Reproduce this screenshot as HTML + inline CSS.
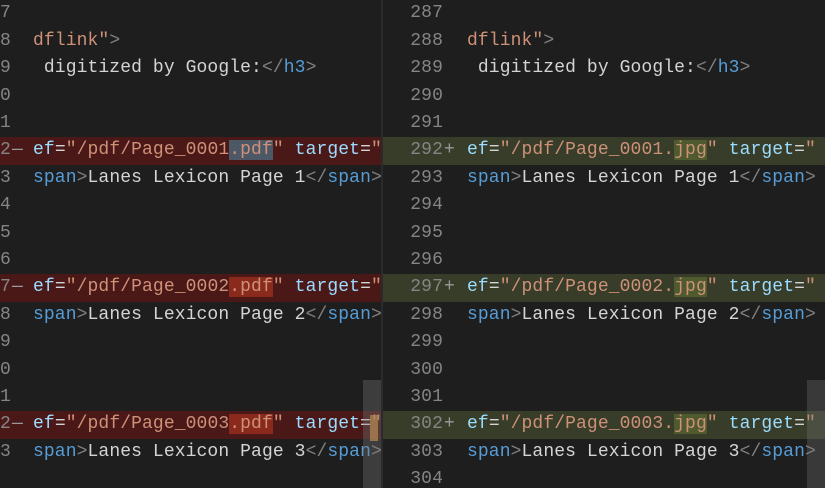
<!DOCTYPE html>
<html><head><meta charset="utf-8"><style>
body{margin:0;width:825px;height:488px;background:#1e1e1e;overflow:hidden;position:relative;font-family:"Liberation Mono",monospace;font-size:18px;letter-spacing:0.1px}
.pane{position:absolute;top:0;height:488px;overflow:hidden;background:#1e1e1e}
.l{position:absolute;left:0;right:0;height:27.4px;line-height:27.4px;white-space:pre;color:#d4d4d4}
.n{position:absolute;color:#858585;text-align:right}
.c{position:absolute}
.s{color:#ce9178}.a{color:#9cdcfe}.t{color:#569cd6}.g{color:#808080}
.del{background:#4b1818}.ins{background:#373d29}
.hd{background:#8a2a1c}.hd1{background:#4d5866}.hi{background:#4f5a2f}
.m{position:absolute;color:#9a9a9a}
</style></head><body>
<div class="pane" style="left:0;width:381px">
<div class="l" style="top:0.3px"><span class="n" style="left:0">7</span></div>
<div class="l" style="top:27.7px"><span class="n" style="left:0">8</span><span class="c" style="left:33px"><span class="s">dflink"</span><span class="g">&gt;</span></span></div>
<div class="l" style="top:55.1px"><span class="n" style="left:0">9</span><span class="c" style="left:33px"> digitized by Google:<span class="g">&lt;/</span><span class="t">h3</span><span class="g">&gt;</span></span></div>
<div class="l" style="top:82.5px"><span class="n" style="left:0">0</span></div>
<div class="l" style="top:109.9px"><span class="n" style="left:0">1</span></div>
<div class="l del" style="top:137.3px"><span class="n" style="left:0">2</span><span class="m" style="left:12px">—</span><span class="c" style="left:33px"><span class="a">ef</span>=<span class="s">"/pdf/Page_0001<span class="hd1">.pdf</span>"</span> <span class="a">target</span>=<span class="s">"</span></span></div>
<div class="l" style="top:164.7px"><span class="n" style="left:0">3</span><span class="c" style="left:33px"><span class="t">span</span><span class="g">&gt;</span>Lanes Lexicon Page 1<span class="g">&lt;/</span><span class="t">span</span><span class="g">&gt;</span></span></div>
<div class="l" style="top:192.1px"><span class="n" style="left:0">4</span></div>
<div class="l" style="top:219.5px"><span class="n" style="left:0">5</span></div>
<div class="l" style="top:246.9px"><span class="n" style="left:0">6</span></div>
<div class="l del" style="top:274.3px"><span class="n" style="left:0">7</span><span class="m" style="left:12px">—</span><span class="c" style="left:33px"><span class="a">ef</span>=<span class="s">"/pdf/Page_0002<span class="hd">.pdf</span>"</span> <span class="a">target</span>=<span class="s">"</span></span></div>
<div class="l" style="top:301.7px"><span class="n" style="left:0">8</span><span class="c" style="left:33px"><span class="t">span</span><span class="g">&gt;</span>Lanes Lexicon Page 2<span class="g">&lt;/</span><span class="t">span</span><span class="g">&gt;</span></span></div>
<div class="l" style="top:329.1px"><span class="n" style="left:0">9</span></div>
<div class="l" style="top:356.5px"><span class="n" style="left:0">0</span></div>
<div class="l" style="top:383.9px"><span class="n" style="left:0">1</span></div>
<div class="l del" style="top:411.3px"><span class="n" style="left:0">2</span><span class="m" style="left:12px">—</span><span class="c" style="left:33px"><span class="a">ef</span>=<span class="s">"/pdf/Page_0003<span class="hd">.pdf</span>"</span> <span class="a">target</span>=<span class="s">"</span></span></div>
<div class="l" style="top:438.7px"><span class="n" style="left:0">3</span><span class="c" style="left:33px"><span class="t">span</span><span class="g">&gt;</span>Lanes Lexicon Page 3<span class="g">&lt;/</span><span class="t">span</span><span class="g">&gt;</span></span></div>
<div style="position:absolute;left:363px;top:380px;width:18px;height:108px;background:rgba(121,121,121,0.35)"></div>
<div style="position:absolute;left:370px;top:415px;width:8px;height:26px;background:#b58a52;opacity:.7"></div>
</div>
<div style="position:absolute;left:381px;top:0;width:2px;height:488px;background:#2b2b2b"></div>
<div class="pane" style="left:383px;width:442px">
<div class="l" style="top:0.3px"><span class="n" style="right:382px">287</span></div>
<div class="l" style="top:27.7px"><span class="n" style="right:382px">288</span><span class="c" style="left:84px"><span class="s">dflink"</span><span class="g">&gt;</span></span></div>
<div class="l" style="top:55.1px"><span class="n" style="right:382px">289</span><span class="c" style="left:84px"> digitized by Google:<span class="g">&lt;/</span><span class="t">h3</span><span class="g">&gt;</span></span></div>
<div class="l" style="top:82.5px"><span class="n" style="right:382px">290</span></div>
<div class="l" style="top:109.9px"><span class="n" style="right:382px">291</span></div>
<div class="l ins" style="top:137.3px"><span class="n" style="right:382px">292</span><span class="m" style="left:61px">+</span><span class="c" style="left:84px"><span class="a">ef</span>=<span class="s">"/pdf/Page_0001.<span class="hi">jpg</span>"</span> <span class="a">target</span>=<span class="s">"</span></span></div>
<div class="l" style="top:164.7px"><span class="n" style="right:382px">293</span><span class="c" style="left:84px"><span class="t">span</span><span class="g">&gt;</span>Lanes Lexicon Page 1<span class="g">&lt;/</span><span class="t">span</span><span class="g">&gt;</span></span></div>
<div class="l" style="top:192.1px"><span class="n" style="right:382px">294</span></div>
<div class="l" style="top:219.5px"><span class="n" style="right:382px">295</span></div>
<div class="l" style="top:246.9px"><span class="n" style="right:382px">296</span></div>
<div class="l ins" style="top:274.3px"><span class="n" style="right:382px">297</span><span class="m" style="left:61px">+</span><span class="c" style="left:84px"><span class="a">ef</span>=<span class="s">"/pdf/Page_0002.<span class="hi">jpg</span>"</span> <span class="a">target</span>=<span class="s">"</span></span></div>
<div class="l" style="top:301.7px"><span class="n" style="right:382px">298</span><span class="c" style="left:84px"><span class="t">span</span><span class="g">&gt;</span>Lanes Lexicon Page 2<span class="g">&lt;/</span><span class="t">span</span><span class="g">&gt;</span></span></div>
<div class="l" style="top:329.1px"><span class="n" style="right:382px">299</span></div>
<div class="l" style="top:356.5px"><span class="n" style="right:382px">300</span></div>
<div class="l" style="top:383.9px"><span class="n" style="right:382px">301</span></div>
<div class="l ins" style="top:411.3px"><span class="n" style="right:382px">302</span><span class="m" style="left:61px">+</span><span class="c" style="left:84px"><span class="a">ef</span>=<span class="s">"/pdf/Page_0003.<span class="hi">jpg</span>"</span> <span class="a">target</span>=<span class="s">"</span></span></div>
<div class="l" style="top:438.7px"><span class="n" style="right:382px">303</span><span class="c" style="left:84px"><span class="t">span</span><span class="g">&gt;</span>Lanes Lexicon Page 3<span class="g">&lt;/</span><span class="t">span</span><span class="g">&gt;</span></span></div>
<div class="l" style="top:466.1px"><span class="n" style="right:382px">304</span></div>
<div style="position:absolute;left:424px;top:380px;width:18px;height:108px;background:rgba(121,121,121,0.3)"></div>
</div>
</body></html>
